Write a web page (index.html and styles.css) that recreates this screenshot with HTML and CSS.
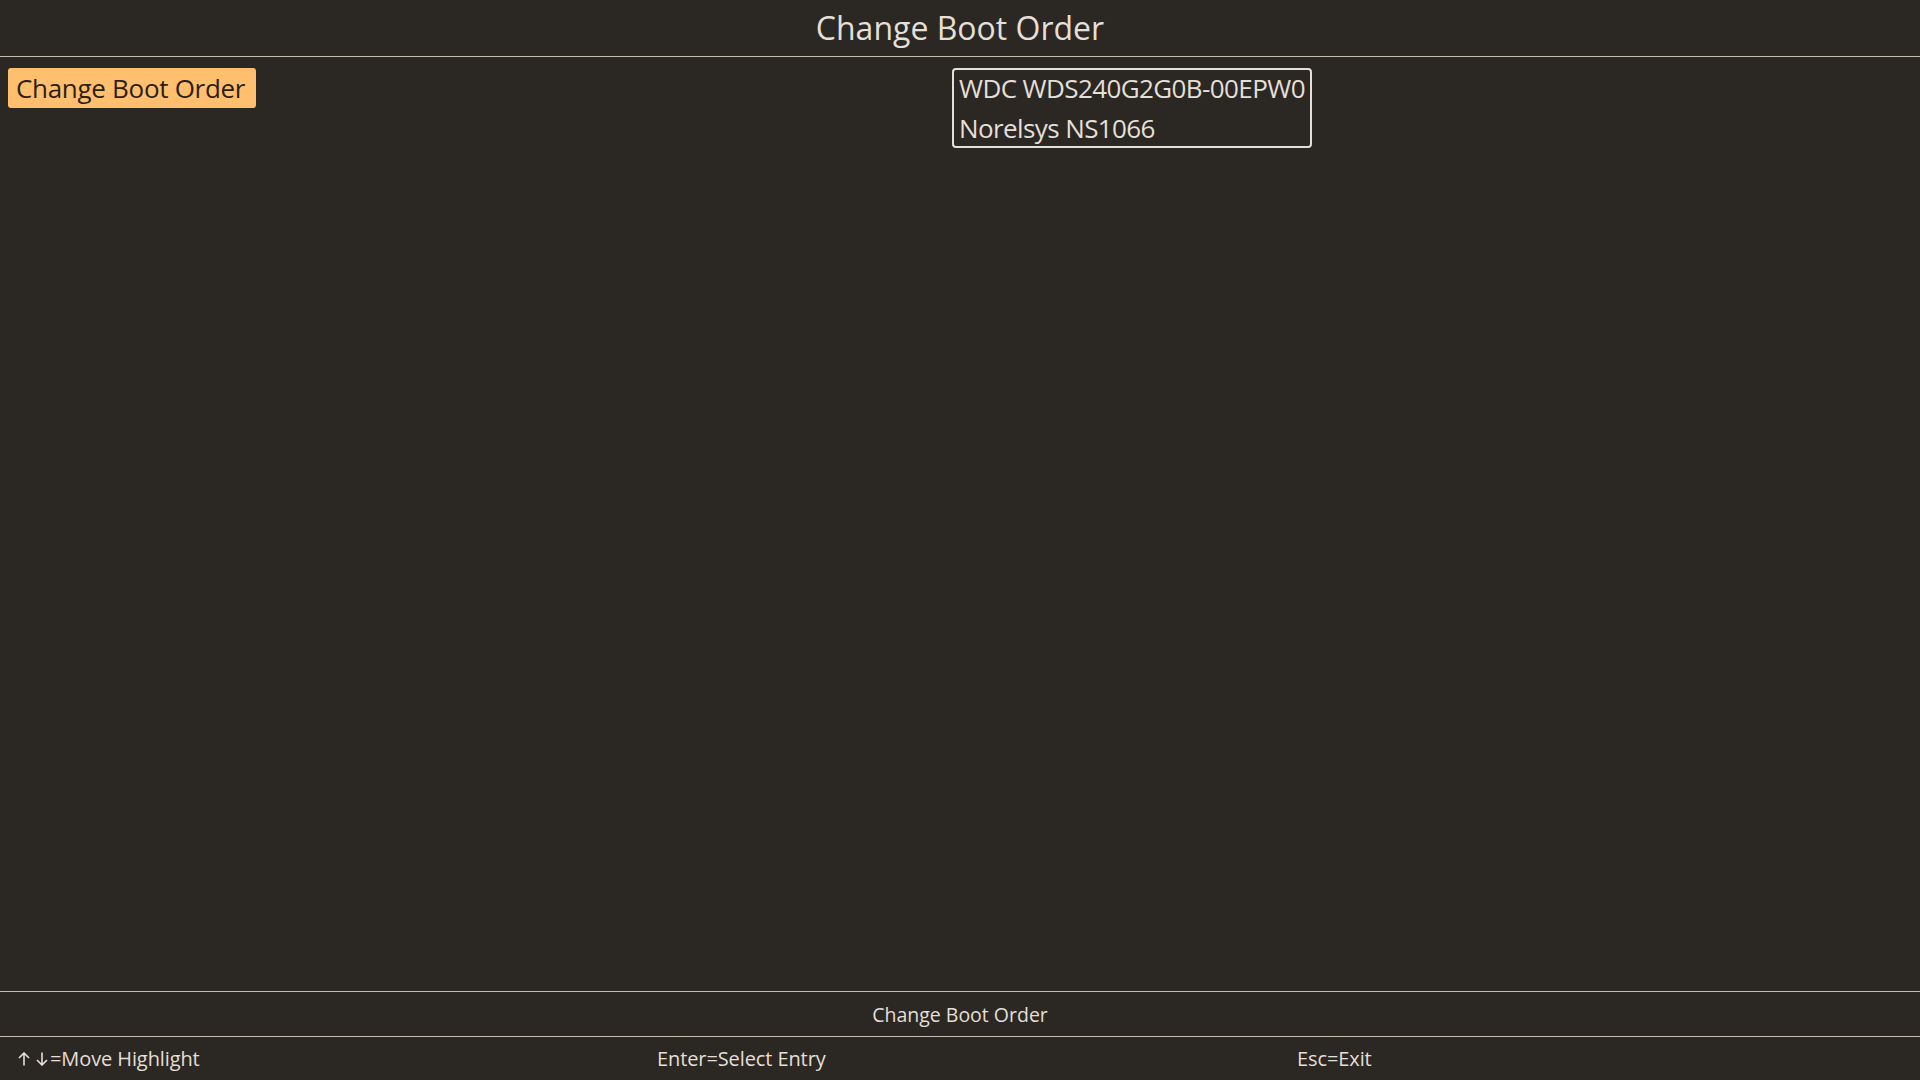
FILE: index.html
```html
<!DOCTYPE html>
<html>
<head>
<meta charset="utf-8">
<link rel="stylesheet" href="styles.css">
</head>
<body>
<div class="screen">
  <header class="title-bar">Change Boot Order</header>
  <main class="content">
    <div class="menu">
      <div class="menu-item selected">Change Boot Order</div>
    </div>
    <div class="options">
      <ul class="boot-list">
        <li>WDC WDS240G2G0B-00EPW0</li>
        <li>Norelsys NS1066</li>
      </ul>
    </div>
  </main>
  <div class="help-bar">Change Boot Order</div>
  <footer class="keys">
    <div class="key"><span class="arrows" aria-label="↑↓"><svg class="arrow" viewBox="0 0 12 14" width="12" height="14"><path d="M6 13.5V1M1 6l5-5 5 5"/></svg><svg class="arrow" viewBox="0 0 12 14" width="12" height="14"><path d="M6 0.5V13M1 8l5 5 5-5"/></svg></span>=Move Highlight</div>
    <div class="key">Enter=Select Entry</div>
    <div class="key">Esc=Exit</div>
  </footer>
</div>
</body>
</html>
```
FILE: styles.css
```css
html, body {
  margin: 0;
  padding: 0;
  background: #2b2823;
}
.screen {
  width: 1920px;
  height: 1080px;
  display: flex;
  flex-direction: column;
  font-family: "Open Sans", "Noto Sans", sans-serif;
  color: #e4dfd7;
}
.title-bar {
  box-sizing: border-box;
  height: 57px;
  padding-bottom: 2px;
  border-bottom: 1px solid #c4bdb2;
  display: flex;
  align-items: center;
  justify-content: center;
  font-size: 32px;
}
.content {
  flex: 1;
  display: flex;
  padding-top: 11px;
}
.menu {
  width: 952px;
  padding-left: 8px;
  box-sizing: border-box;
}
.menu-item {
  display: inline-block;
  height: 40px;
  line-height: 40px;
  padding: 0 11px 0 8px;
  font-size: 26px;
  letter-spacing: -0.3px;
  border-radius: 3px;
}
.menu-item.selected {
  background: #ffbf6e;
  color: #2b1f12;
}
.options {
  flex: 1;
}
.boot-list {
  list-style: none;
  margin: 0;
  padding: 0 5px 0 5px;
  display: inline-block;
  border: 2px solid #e4dfd7;
  border-radius: 4px;
}
.boot-list li {
  height: 40px;
  line-height: 40px;
  font-size: 26px;
  letter-spacing: -0.6px;
}
.boot-list li:first-child {
  margin-top: -2px;
}
.boot-list li:last-child {
  margin-bottom: -2px;
}
.help-bar {
  height: 44px;
  border-top: 1px solid #c4bdb2;
  border-bottom: 1px solid #c4bdb2;
  display: flex;
  align-items: center;
  justify-content: center;
  font-size: 19.5px;
}
.keys {
  height: 43px;
  display: grid;
  grid-template-columns: repeat(3, 1fr);
  align-items: center;
  font-size: 20px;
  letter-spacing: -0.1px;
}
.key {
  padding-left: 17px;
  display: flex;
  align-items: center;
}
.arrows {
  display: inline-flex;
  gap: 6px;
  margin-right: 2px;
  padding-left: 1px;
}
.arrow {
  display: block;
  fill: none;
  stroke: #e4dfd7;
  stroke-width: 1.6;
}
```
